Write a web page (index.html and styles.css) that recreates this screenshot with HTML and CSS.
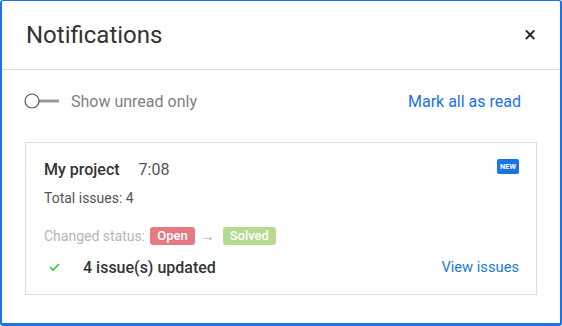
FILE: index.html
```html
<!DOCTYPE html>
<html lang="en">
<head>
    <meta charset="UTF-8">
    <title>Notifications</title>
    <link rel="stylesheet" href="styles.css">
</head>
<body>
    <div class="dialog">
        <div class="dialog-header">
            <h2>Notifications</h2>
            <span class="close">&times;</span>
        </div>
        <div class="toolbar">
            <label class="toggle">
                <svg width="36" height="16" viewBox="0 0 36 16">
                    <rect x="14" y="6.5" width="21" height="3" fill="#9a9a9a"/>
                    <circle cx="8" cy="8" r="7" fill="#fff" stroke="#555" stroke-width="1.2"/>
                </svg>
                <span>Show unread only</span>
            </label>
            <a class="link" href="#">Mark all as read</a>
        </div>
        <div class="card">
            <div class="card-head">
                <span class="project">My project</span>
                <span class="time">7:08</span>
                <span class="badge-new">NEW</span>
            </div>
            <div class="total">Total issues: 4</div>
            <div class="status">
                Changed status:
                <span class="tag tag-open">Open</span>
                <span class="arrow">&rarr;</span>
                <span class="tag tag-solved">Solved</span>
            </div>
            <div class="card-foot">
                <svg class="check" width="12" height="10" viewBox="0 0 12 10">
                    <polyline points="1,5 4,8 10,2" fill="none" stroke="#2ecc2e" stroke-width="1.6"/>
                </svg>
                <span class="updated">4 issue(s) updated</span>
                <a class="link view" href="#">View issues</a>
            </div>
        </div>
    </div>
</body>
</html>
```

FILE: styles.css
```css
body {
    margin: 0;
    font-family: Roboto, 'Liberation Sans', Arial, sans-serif;
    background: #fff;
}
.dialog {
    box-sizing: border-box;
    width: 562px;
    height: 326px;
    border: solid #1a73e8;
    border-width: 1px 2px 3px 2px;
    border-radius: 3px;
    background: #fff;
}
.dialog-header {
    display: flex;
    align-items: center;
    justify-content: space-between;
    height: 68px;
    padding: 0 24px 0 24px;
    border-bottom: 1px solid #dcdcdc;
}
.dialog-header h2 {
    margin: 0;
    font-size: 24px;
    font-weight: 400;
    color: #333;
}
.close {
    font-size: 22px;
    color: #222;
    line-height: 1;
}
.toolbar {
    display: flex;
    align-items: center;
    justify-content: space-between;
    height: 62px;
    padding: 0 39px 0 22px;
}
.toggle {
    display: flex;
    align-items: center;
    gap: 11px;
    color: #808080;
    font-size: 16px;
}
.link {
    color: #1a73e8;
    text-decoration: none;
    font-size: 16px;
}
.card {
    margin: 10px 23px 0 23px;
    padding: 15px 17px 16px 18px;
    border: 1px solid #dcdcdc;
}
.card-head {
    display: flex;
    align-items: center;
    height: 22px;
}
.project {
    font-size: 16px;
    font-weight: 500;
    color: #333;
}
.time {
    margin-left: 19px;
    font-size: 16px;
    color: #555;
}
.badge-new {
    margin-left: auto;
    margin-top: -5px;
    background: #1a73e8;
    color: #fff;
    font-size: 7.5px;
    font-weight: 700;
    padding: 4px 3px;
    border-radius: 2px;
    line-height: 7px;
}
.total {
    margin-top: 9px;
    font-size: 14px;
    line-height: 18px;
    color: #555;
}
.status {
    display: flex;
    align-items: center;
    margin-top: 20px;
    height: 18px;
    font-size: 14px;
    color: #b5b5b5;
}
.tag {
    color: #fff;
    font-size: 13px;
    line-height: 18px;
    padding: 0 7px;
    border-radius: 3px;
    font-weight: 500;
}
.tag-open {
    margin-left: 5px;
    background: #e47b83;
}
.tag-solved {
    background: #b6da90;
}
.arrow {
    margin: 0 8px 0 5px;
    font-size: 15px;
    color: #aaa;
}
.card-foot {
    display: flex;
    align-items: center;
    margin-top: 11px;
    height: 22px;
}
.check {
    margin-left: 5px;
}
.updated {
    margin-left: 22px;
    font-size: 16px;
    font-weight: 500;
    color: #333;
}
.view {
    margin-left: auto;
    font-size: 14.7px;
    color: #1a7bd4;
}
```
